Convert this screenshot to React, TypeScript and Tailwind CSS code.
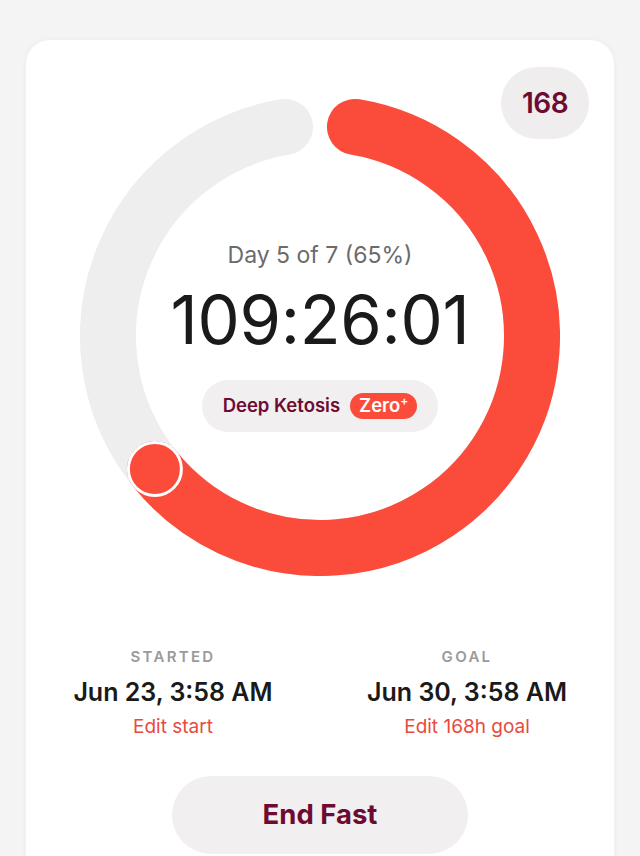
import React from 'react';

const RED = '#fb4b3b';

// ring geometry: 480 box, r 212, track from 9.5deg to 350.5deg
const polar = (deg: number, r = 212) => {
    const a = (deg * Math.PI) / 180;
    return { x: 240 + r * Math.sin(a), y: 240 - r * Math.cos(a) };
};

const ProgressRing: React.FC<{ progress: number }> = ({ progress }) => {
    const start = 9.5;
    const end = 350.5;
    const stop = start + (end - start) * progress;
    const s = polar(start);
    const e = polar(end);
    const p = polar(stop);
    const large = stop - start > 180 ? 1 : 0;

    return (
        <svg width="480" height="480" viewBox="0 0 480 480" className="block">
            <path
                d={`M ${s.x} ${s.y} A 212 212 0 1 1 ${e.x} ${e.y}`}
                fill="none"
                stroke="#eeeeee"
                strokeWidth="56"
                strokeLinecap="round"
            />
            <path
                d={`M ${s.x} ${s.y} A 212 212 0 ${large} 1 ${p.x} ${p.y}`}
                fill="none"
                stroke={RED}
                strokeWidth="56"
                strokeLinecap="round"
            />
            <circle cx={p.x} cy={p.y} r="26.5" fill={RED} stroke="#ffffff" strokeWidth="3" />
        </svg>
    );
};

const App: React.FC = () => {
    return (
        <div
            className="min-h-screen bg-[#f5f4f4] px-[26px] pt-[40px]"
            style={{ fontFamily: 'Inter, "Noto Sans", sans-serif' }}
        >
            <div className="relative bg-white rounded-[24px] shadow-[0_0_6px_rgba(0,0,0,0.04)] pb-[40px]">
                {/* Plan badge */}
                <div className="absolute top-[27px] right-[25px] w-[88px] h-[72px] rounded-full bg-[#efedee] flex items-center justify-center">
                    <span className="text-[28px] font-semibold text-[#6d0b31] tracking-[-0.5px]">168</span>
                </div>

                {/* Ring */}
                <div className="pt-[56px] flex justify-center">
                    <div className="relative w-[480px] h-[480px]">
                        <ProgressRing progress={0.65} />
                        <div className="absolute inset-0 flex flex-col items-center pt-[143px]">
                            <div className="text-[23px] leading-[32px] text-[#6b6b6b]">Day 5 of 7 (65%)</div>
                            <div className="mt-[15px] text-[67px] leading-[67px] text-[#1a1a1a] tracking-[-0.3px]">
                                109:26:01
                            </div>
                            <div className="mt-[27px] h-[52px] px-[21px] rounded-full bg-[#f1eff0] flex items-center gap-[10px]">
                                <span className="text-[18.5px] font-semibold text-[#6d0b31]">Deep Ketosis</span>
                                <span
                                    className="h-[26px] px-[9px] rounded-full flex items-center text-[18.5px] font-semibold text-white"
                                    style={{ backgroundColor: RED }}
                                >
                                    Zero<sup className="text-[12px] -top-[5px]">+</sup>
                                </span>
                            </div>
                        </div>
                    </div>
                </div>

                {/* Start / goal */}
                <div className="mt-[72px] grid grid-cols-2 text-center">
                    <div className="flex flex-col items-center">
                        <div className="text-[15px] leading-[18px] font-semibold tracking-[2.3px] text-[#9a9a9a]">STARTED</div>
                        <div className="mt-[11px] text-[25px] leading-[30px] font-semibold text-[#1a1a1a]">Jun 23, 3:58 AM</div>
                        <div className="mt-[8px] text-[19px] leading-[24px] text-[#e94a3f]">Edit start</div>
                    </div>
                    <div className="flex flex-col items-center">
                        <div className="text-[15px] leading-[18px] font-semibold tracking-[2.3px] text-[#9a9a9a]">GOAL</div>
                        <div className="mt-[11px] text-[25px] leading-[30px] font-semibold text-[#1a1a1a]">Jun 30, 3:58 AM</div>
                        <div className="mt-[8px] text-[19px] leading-[24px] text-[#e94a3f]">Edit 168h goal</div>
                    </div>
                </div>

                {/* Action */}
                <div className="mt-[37px] flex justify-center">
                    <button className="w-[296px] h-[78px] rounded-full bg-[#f1eff0] text-[27.5px] font-bold text-[#6d0b31]">
                        End Fast
                    </button>
                </div>
            </div>
        </div>
    );
};

export default App;
